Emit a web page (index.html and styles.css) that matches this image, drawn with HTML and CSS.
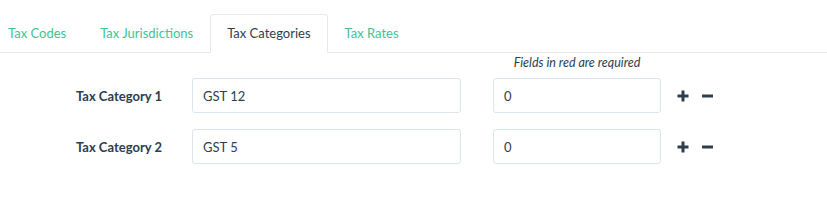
FILE: index.html
```html
<!DOCTYPE html>
<html>
<head>
<meta charset="utf-8">
<link rel="stylesheet" href="styles.css">
</head>
<body>
<nav class="tabs">
  <a class="tab">Tax Codes</a>
  <a class="tab">Tax Jurisdictions</a>
  <a class="tab active">Tax Categories</a>
  <a class="tab">Tax Rates</a>
</nav>
<div class="form">
  <div class="hint-row">
    <div class="hint">Fields in red are required</div>
  </div>
  <div class="row">
    <label class="label">Tax Category 1</label>
    <input class="input name" type="text" value="GST 12">
    <input class="input value" type="text" value="0">
    <div class="actions">
      <svg class="icon plus" width="12" height="12" viewBox="0 0 12 12"><path d="M6 0.5V11.5M0.5 6H11.5" stroke="#2c3e50" stroke-width="3"/></svg>
      <svg class="icon minus" width="11" height="12" viewBox="0 0 11 12"><path d="M0 6H11" stroke="#2c3e50" stroke-width="3"/></svg>
    </div>
  </div>
  <div class="row">
    <label class="label">Tax Category 2</label>
    <input class="input name" type="text" value="GST 5">
    <input class="input value" type="text" value="0">
    <div class="actions">
      <svg class="icon plus" width="12" height="12" viewBox="0 0 12 12"><path d="M6 0.5V11.5M0.5 6H11.5" stroke="#2c3e50" stroke-width="3"/></svg>
      <svg class="icon minus" width="11" height="12" viewBox="0 0 11 12"><path d="M0 6H11" stroke="#2c3e50" stroke-width="3"/></svg>
    </div>
  </div>
</div>
</body>
</html>
```
FILE: styles.css
```css
html, body {
  margin: 0;
  padding: 0;
  background: #fff;
  font-family: Lato, "Open Sans", sans-serif;
  color: #2c3e50;
}
.tabs {
  display: flex;
  padding-top: 14px;
  border-bottom: 1px solid #e6e9ec;
  padding-left: 0;
  margin-left: -9px;
}
.tab {
  display: block;
  padding: 8px 16px;
  font-size: 13px;
  line-height: 21px;
  color: #45bf94;
  border: 1px solid transparent;
  border-top-left-radius: 4px;
  border-top-right-radius: 4px;
  margin-bottom: -1px;
}
.tab.active {
  color: #2c3e50;
  border-color: #e6e9ec #e6e9ec #fff;
  background: #fff;
}
.form {
  display: flex;
  flex-direction: column;
}
.hint-row {
  display: flex;
  padding-left: 493px;
  height: 25px;
}
.hint {
  width: 168px;
  text-align: center;
  font-style: italic;
  font-size: 12.5px;
  line-height: 18px;
  padding-top: 1px;
  box-sizing: border-box;
}
.row {
  display: flex;
  align-items: center;
  margin-bottom: 16px;
}
.label {
  width: 162px;
  text-align: right;
  font-weight: bold;
  font-size: 13px;
}
.input {
  box-sizing: border-box;
  height: 35px;
  border: 1px solid #dce4ec;
  border-radius: 3px;
  padding: 0 10px;
  font-family: Lato, "Open Sans", sans-serif;
  font-size: 13px;
  color: #2c3e50;
  outline: none;
}
.name {
  margin-left: 30px;
  width: 269px;
}
.value {
  margin-left: 32px;
  width: 168px;
}
.actions {
  display: flex;
  align-items: center;
  margin-left: 16px;
}
.minus {
  margin-left: 13px;
}
```
